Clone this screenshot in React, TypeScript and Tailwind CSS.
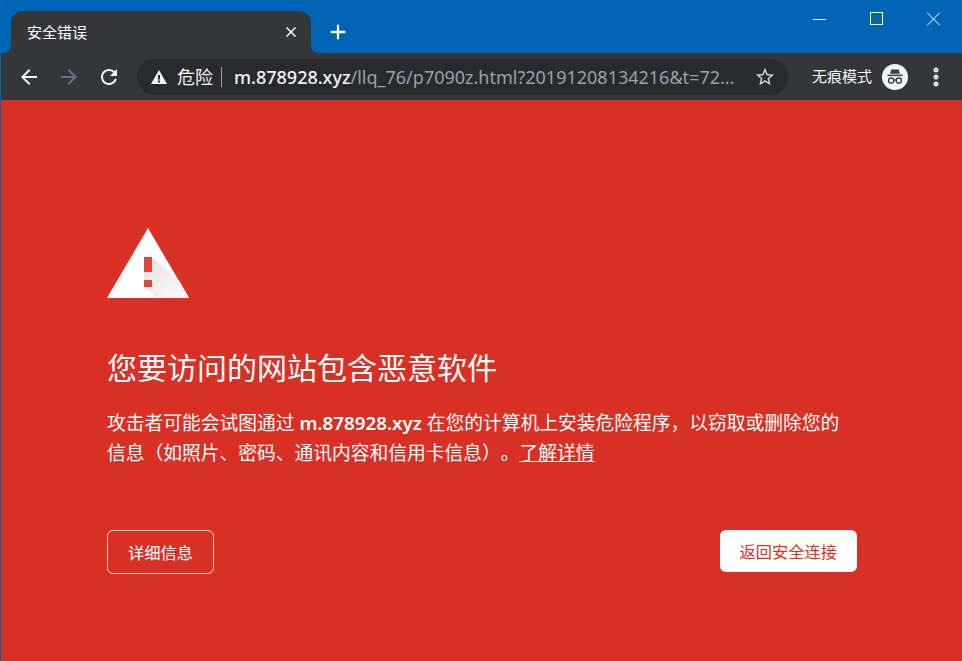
import { Plus, X, EllipsisVertical } from "lucide-react";

const font = { fontFamily: '"Noto Sans", "Noto Sans CJK SC", sans-serif' };

function Glyph({ d, size = 24, className }: { d: string; size?: number; className?: string }) {
  return (
    <svg width={size} height={size} viewBox="0 0 24 24" fill="currentColor" className={className}>
      <path d={d} />
    </svg>
  );
}

const backPath = "M20 11H7.830l5.590-5.590L12 4l-8 8 8 8 1.410-1.410L7.830 13H20v-2z";
const forwardPath = "M12 4l-1.410 1.410L16.170 11H4v2h12.170l-5.580 5.590L12 20l8-8z";
const reloadPath =
  "M17.650 6.350C16.200 4.900 14.210 4 12 4c-4.420 0-7.990 3.580-7.990 8s3.570 8 7.990 8c3.730 0 6.840-2.550 7.730-6h-2.080c-.820 2.330-3.040 4-5.650 4-3.310 0-6-2.690-6-6s2.690-6 6-6c1.660 0 3.140.690 4.220 1.780L13 11h7V4l-2.350 2.350z";
const starPath =
  "M22 9.240l-7.190-.620L12 2 9.190 8.630 2 9.240l5.460 4.730L5.820 21 12 17.270 18.180 21l-1.630-7.030L22 9.240zM12 15.400l-3.760 2.270 1-4.280-3.320-2.880 4.380-.380L12 6.100l1.710 4.040 4.380.380-3.320 2.880 1 4.280L12 15.400z";

function Corner({ flip }: { flip?: boolean }) {
  return (
    <svg width="8" height="8" viewBox="0 0 8 8" className={flip ? "absolute bottom-0 -right-2" : "absolute bottom-0 -left-2"}>
      <path d={flip ? "M0 0C0 5 3 8 8 8H0Z" : "M8 0C8 5 5 8 0 8H8Z"} fill="#35363a" />
    </svg>
  );
}

function WarningSmall() {
  return (
    <svg width="16" height="14" viewBox="0 0 16 14">
      <path d="M8 0L16 14H0Z" fill="#f1f3f4" />
      <rect x="7" y="5" width="2" height="4.500" fill="#292a2d" />
      <rect x="7" y="10.500" width="2" height="2" fill="#292a2d" />
    </svg>
  );
}

function Incognito() {
  return (
    <div className="flex h-[26px] w-[26px] items-center justify-center rounded-full bg-gray-100">
      <svg width="20" height="20" viewBox="0 0 20 20" fill="none">
        <path d="M6.300 2.500h7.400l1.300 4.300H5Z" fill="#3c4043" />
        <rect x="2.500" y="7.600" width="15" height="1.500" fill="#3c4043" />
        <circle cx="6.200" cy="13.600" r="2.600" stroke="#3c4043" strokeWidth="1.400" />
        <circle cx="13.800" cy="13.600" r="2.600" stroke="#3c4043" strokeWidth="1.400" />
        <path d="M8.800 13.200c.8-.5 1.600-.5 2.400 0" stroke="#3c4043" strokeWidth="1.200" />
      </svg>
    </div>
  );
}

function BigWarning() {
  return (
    <svg width="82" height="70" viewBox="0 0 82 70">
      <defs>
        <linearGradient id="shade" x1="0" y1="0" x2="1" y2="1">
          <stop offset="0" stopColor="#e4e4e4" />
          <stop offset="1" stopColor="#fbfbfb" />
        </linearGradient>
      </defs>
      <path d="M41 0L82 70H0Z" fill="#fff" />
      <path d="M45 29L72.500 53 82 70H50L37 59V44H45Z" fill="url(#shade)" />
      <rect x="37" y="29" width="8" height="15" fill="#e0463e" />
      <rect x="37" y="52" width="8" height="7" fill="#e0463e" />
    </svg>
  );
}

export default function App() {
  return (
    <div className="flex h-screen flex-col overflow-hidden border-l border-[#0264b4]" style={font}>
      <header className="flex h-[53px] items-end bg-[#0264b4] pl-2.5">
        <div className="relative flex h-[42px] w-[300px] items-center justify-between rounded-t-xl bg-[#35363a] pl-4 pr-3 text-white">
          <Corner />
          <Corner flip />
          <span className="text-[15px]">安全错误</span>
          <X size={16} strokeWidth={2.5} className="text-gray-100" />
        </div>
        <Plus size={22} strokeWidth={2.5} className="mb-2.5 ml-4 text-white" />
        <div className="ml-auto flex items-center gap-11 self-start pr-5.5 pt-3 text-white">
          <svg width="13" height="14" viewBox="0 0 13 14"><path d="M0 7.500h13" stroke="#fff" /></svg>
          <svg width="13" height="14" viewBox="0 0 13 14"><rect x=".5" y=".5" width="12" height="12" fill="none" stroke="#fff" /></svg>
          <svg width="13" height="14" viewBox="0 0 13 14"><path d="M0 .5l13 13M13 .5l-13 13" stroke="#fff" /></svg>
        </div>
      </header>

      <nav className="flex h-[47px] items-center bg-[#35363a] pl-4 pr-3.5">
        <div className="flex items-center gap-4">
          <Glyph d={backPath} className="text-gray-100" />
          <Glyph d={forwardPath} className="text-gray-500" />
          <Glyph d={reloadPath} className="text-gray-100" />
        </div>
        <div className="ml-4 flex h-9 flex-1 items-center rounded-full bg-[#292a2d] pl-3.5 pr-3">
          <WarningSmall />
          <span className="ml-2.5 text-lg text-gray-100">危险</span>
          <span className="ml-2 h-5 w-px bg-gray-400" />
          <span className="ml-3 truncate text-lg">
            <span className="font-medium text-gray-100">m.878928.xyz</span>
            <span className="text-gray-400">/llq_76/p7090z.html?20191208134216&amp;t=72...</span>
          </span>
          <Glyph d={starPath} size={22} className="ml-auto shrink-0 text-gray-300" />
        </div>
        <span className="ml-6 text-[15px] text-gray-100">无痕模式</span>
        <div className="ml-2.5">
          <Incognito />
        </div>
        <EllipsisVertical size={24} strokeWidth={3} className="ml-4 text-gray-200" />
      </nav>

      <main className="flex-1 bg-[#d93025] pl-[106px] pt-32 text-white">
        <div className="flex w-[750px] flex-col">
          <BigWarning />
          <h1 className="mt-12 text-3xl leading-11">您要访问的网站包含恶意软件</h1>
          <p className="mt-4.5 text-[18.75px] leading-[30px] [text-spacing-trim:space-all]">
            攻击者可能会试图通过 <strong className="font-semibold">m.878928.xyz</strong> 在您的计算机上安装危险程序，以窃取或删除您的
            <br />
            信息（如照片、密码、通讯内容和信用卡信息）。<span className="underline">了解详情</span>
          </p>
          <div className="mt-15.5 flex items-start justify-between">
            <button className="h-11 rounded-md border border-white/80 px-5 pt-0.5 text-[16.25px]">详细信息</button>
            <button className="h-[42px] rounded-md bg-white px-5 pt-0.5 text-[16.25px] text-[#d93025]">返回安全连接</button>
          </div>
        </div>
      </main>
    </div>
  );
}
